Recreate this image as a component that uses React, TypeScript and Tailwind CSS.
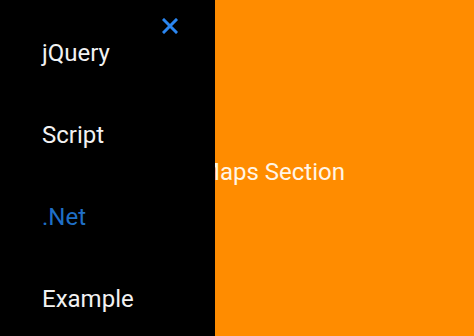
import React from "react";

const links = [
  { label: "jQuery", active: false },
  { label: "Script", active: false },
  { label: ".Net", active: true },
  { label: "Example", active: false },
];

export default function App() {
  return (
    <div
      className="relative h-[336px] w-full overflow-hidden bg-[#ff8c00]"
      style={{ fontFamily: "Roboto, 'Liberation Sans', sans-serif" }}
    >
      {/* main content */}
      <div className="pl-[199px] pt-[158px] text-[24px] leading-[28px] text-[#fff5e6]">
        Maps Section
      </div>

      {/* side nav overlay */}
      <div className="absolute left-0 top-0 h-full w-[215px] bg-black">
        <button className="absolute right-[37px] top-[18px] text-[#2b86f0]">
          <svg width="16" height="16" viewBox="0 0 16 16">
            <path
              d="M2 2 L14 14 M14 2 L2 14"
              stroke="currentColor"
              strokeWidth="3"
              strokeLinecap="square"
            />
          </svg>
        </button>
        <nav className="flex flex-col gap-[54px] pl-[42px] pt-[39px]">
          {links.map((link) => (
            <a
              key={link.label}
              href="#"
              className={
                "block text-[24px] leading-[28px] " +
                (link.active ? "text-[#1f6fc6]" : "text-[#f2f2f2]")
              }
            >
              {link.label}
            </a>
          ))}
        </nav>
      </div>
    </div>
  );
}
